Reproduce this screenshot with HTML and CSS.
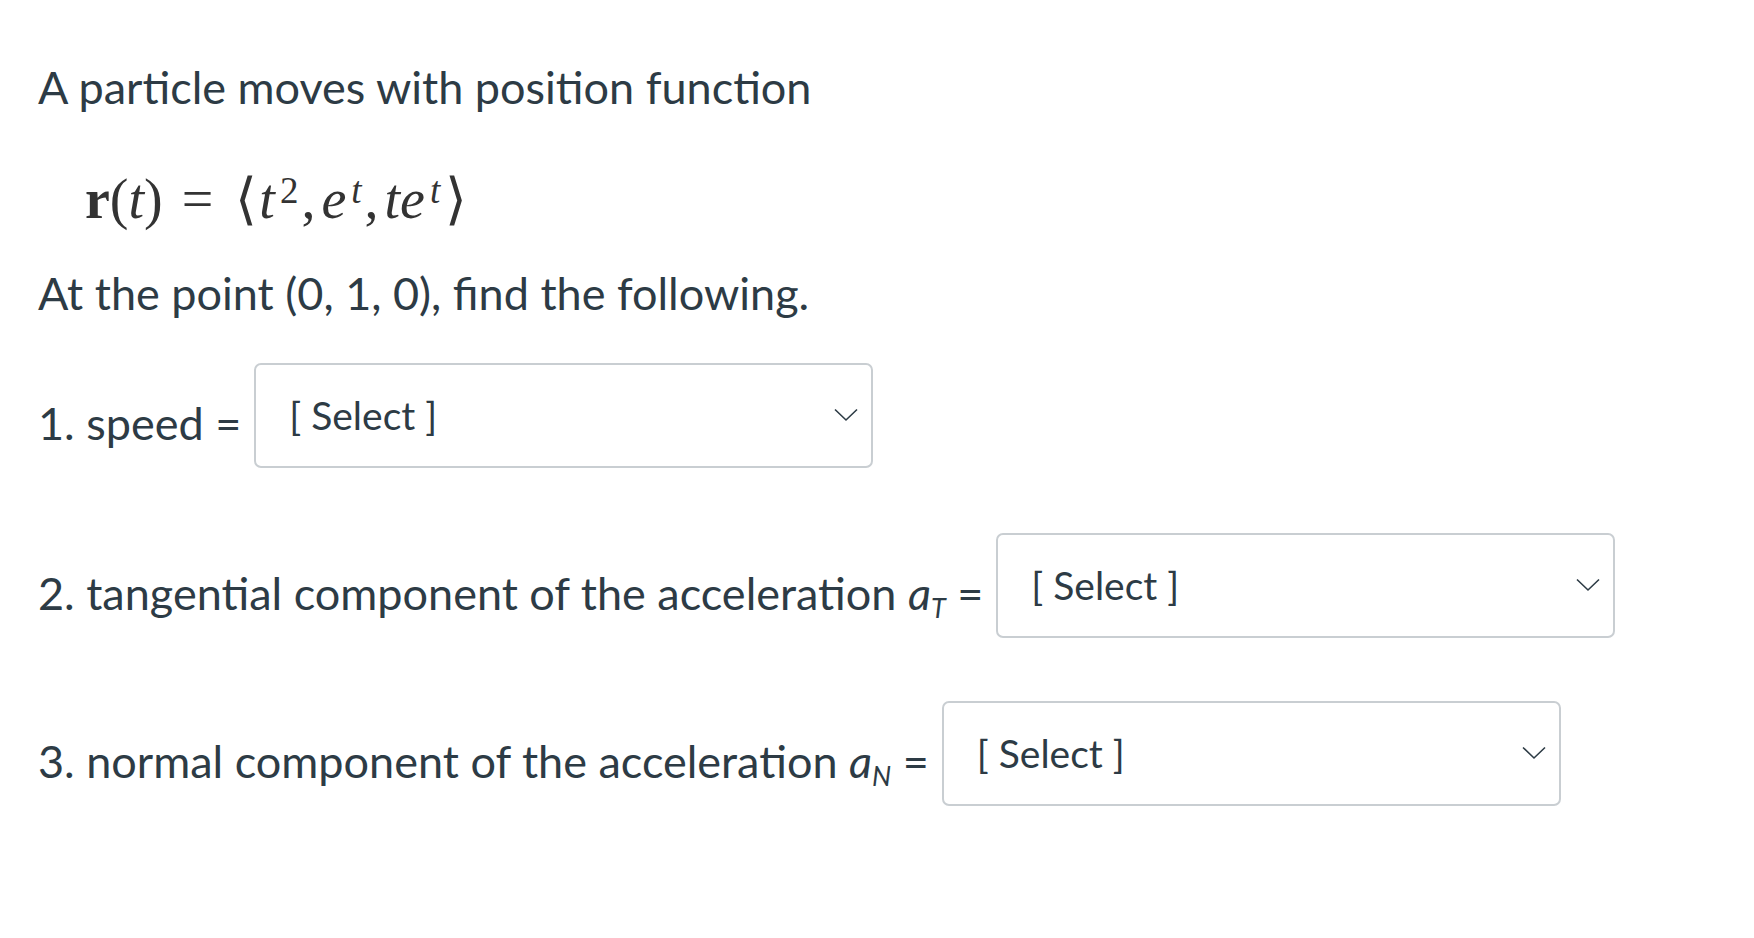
FILE: index.html
```html
<!DOCTYPE html>
<html lang="en">
<head>
<meta charset="utf-8">
<title>Question</title>
<link rel="stylesheet" href="styles.css">
</head>
<body>
<div class="question">
  <p class="intro">A particle moves with position function</p>
  <div class="formula">
    <span class="mb">r</span><span class="mo">(</span><span class="mi">t</span><span class="mo">)</span><span class="rel">=</span><span class="mo angle">⟨</span><span class="mi">t</span><sup class="sup up">2</sup><span class="comma">,</span><span class="mi">e</span><sup class="sup">t</sup><span class="comma">,</span><span class="mi">t</span><span class="mi">e</span><sup class="sup">t</sup><span class="mo angle close">⟩</span>
  </div>
  <p class="intro point">At the point (0, 1, 0), find the following.</p>

  <div class="row row1">
    <span class="label">1. speed =</span>
    <div class="select"><span class="select-text">[ Select ]</span><svg class="chev" viewBox="0 0 24 14" width="24" height="14"><path d="M1 1.5 L12 12 L23 1.5" fill="none" stroke="#2d3b45" stroke-width="1.6"/></svg></div>
  </div>

  <div class="row row2">
    <span class="label">2. tangential component of the acceleration <span class="var">a<sub>T</sub></span> =</span>
    <div class="select"><span class="select-text">[ Select ]</span><svg class="chev" viewBox="0 0 24 14" width="24" height="14"><path d="M1 1.5 L12 12 L23 1.5" fill="none" stroke="#2d3b45" stroke-width="1.6"/></svg></div>
  </div>

  <div class="row row3">
    <span class="label">3. normal component of the acceleration <span class="var">a<sub>N</sub></span> =</span>
    <div class="select"><span class="select-text">[ Select ]</span><svg class="chev" viewBox="0 0 24 14" width="24" height="14"><path d="M1 1.5 L12 12 L23 1.5" fill="none" stroke="#2d3b45" stroke-width="1.6"/></svg></div>
  </div>
</div>
</body>
</html>
```

FILE: styles.css
```css
html, body {
  margin: 0;
  padding: 0;
  background: #ffffff;
}

body {
  font-family: Lato, "Noto Sans", sans-serif;
  color: #2d3b45;
  font-size: 45px;
  line-height: 1.5;
}

.question {
  padding: 54px 0 0 38px;
}

.intro {
  margin: 0;
}

.formula {
  font-family: "Liberation Serif", "Times New Roman", serif;
  font-size: 56px;
  color: #333333;
  padding-left: 47px;
  margin-top: 47px;
  line-height: 60px;
  height: 60px;
  white-space: nowrap;
}

.formula .mb {
  font-weight: bold;
}

.formula .mi {
  font-style: italic;
}

.formula .rel {
  margin: 0 22px 0 19px;
}

.formula .angle {
  margin-right: 2px;
}

.formula .angle.close {
  margin: 0 0 0 5px;
}

.formula .sup {
  font-size: 37px;
  font-style: italic;
  vertical-align: 15px;
  line-height: 0;
  margin-left: 5px;
}

.formula .sup.up {
  font-style: normal;
}

.formula .comma {
  margin: 0 6px 0 3px;
}

.point {
  margin-top: 31px;
}

.row {
  display: flex;
  align-items: flex-end;
}

.row1 {
  margin-top: 36px;
}

.row2 {
  margin-top: 65px;
}

.row3 {
  margin-top: 63px;
}

.label {
  white-space: nowrap;
  margin-bottom: 11px;
  margin-right: 13px;
}

.var {
  font-style: italic;
}

.var sub {
  font-size: 27px;
  vertical-align: -8px;
  line-height: 0;
}

.select {
  box-sizing: border-box;
  width: 619px;
  height: 105px;
  flex: none;
  border: 2px solid #c9ced2;
  border-radius: 7px;
  display: flex;
  align-items: flex-start;
  justify-content: space-between;
  padding: 0 13px 0 33px;
}

.select-text {
  font-size: 39px;
  line-height: 1;
  margin-top: 31px;
}

.chev {
  margin-top: 43px;
}
```
